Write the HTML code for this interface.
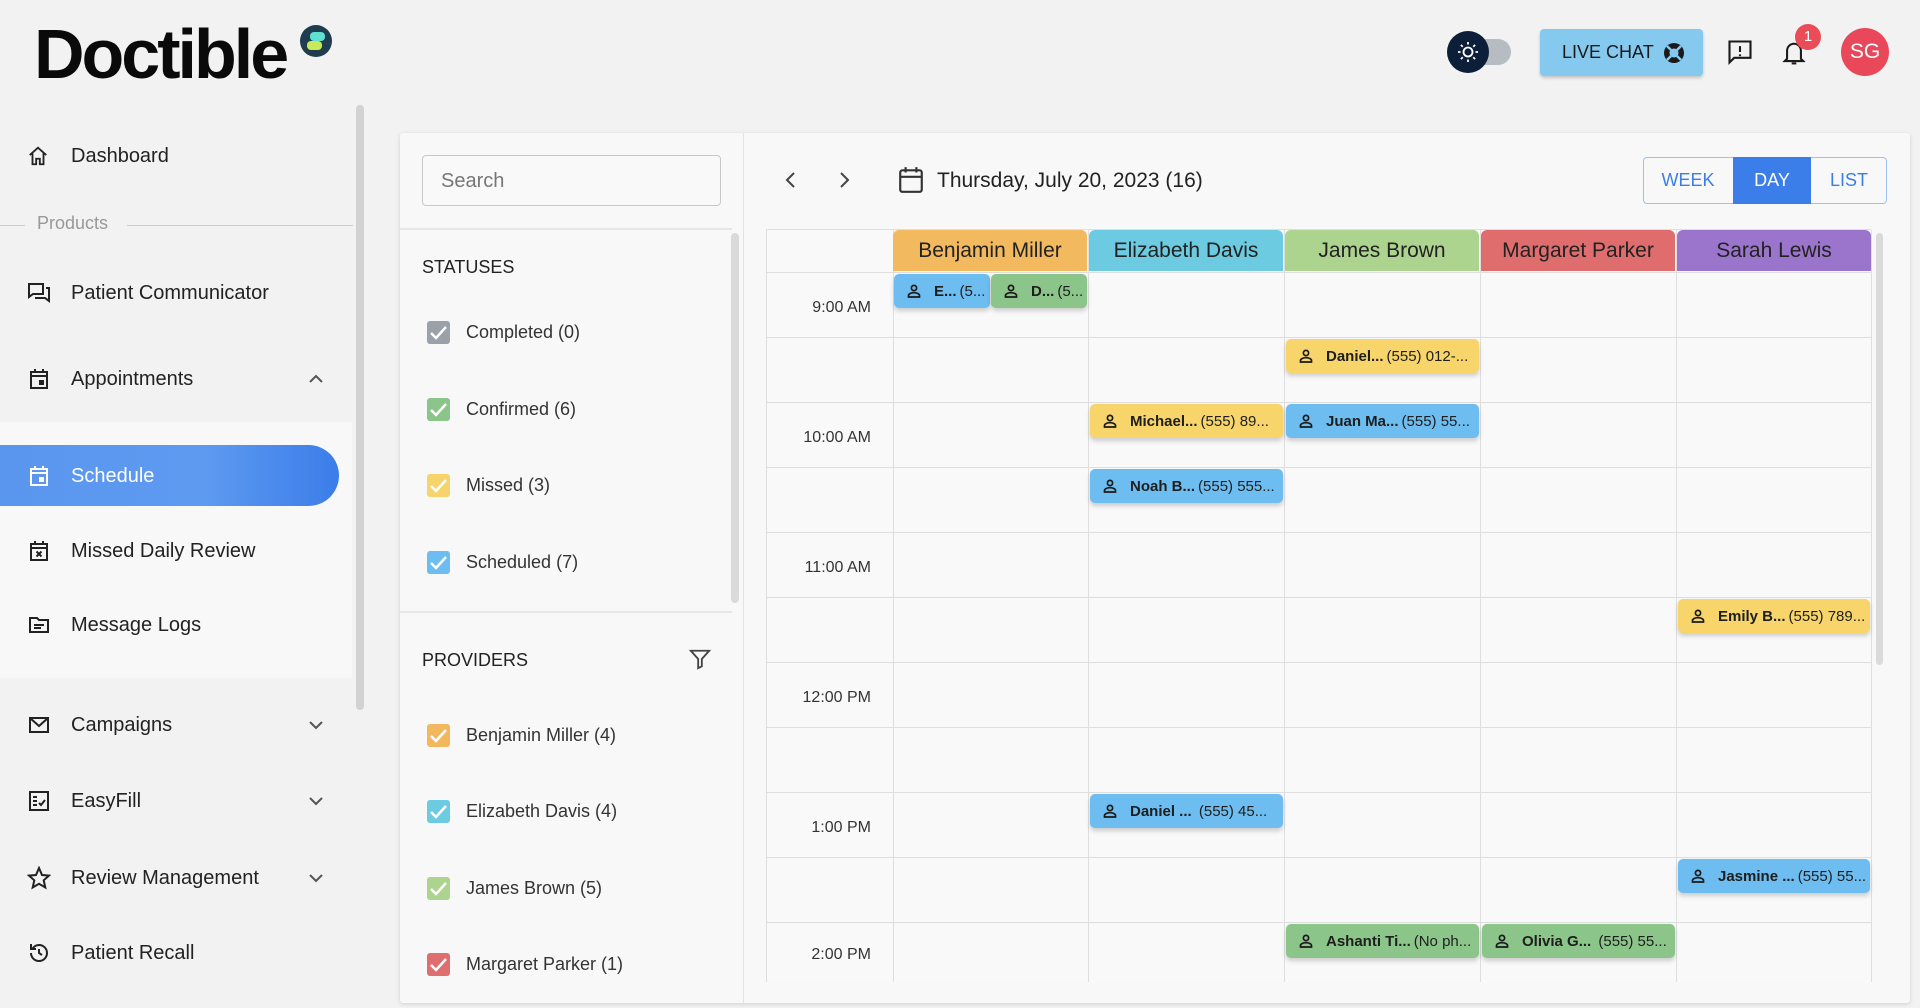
<!DOCTYPE html>
<html><head><meta charset="utf-8"><style>
*{box-sizing:border-box;margin:0;padding:0}
body{width:1920px;height:1008px;overflow:hidden;background:#f2f2f2;font-family:"Liberation Sans",sans-serif;color:#1e1e1e;position:relative}
.a{position:absolute}
.nav{position:absolute;left:0;width:340px;height:50px;display:flex;align-items:center;font-size:20px;color:#222}
.nav svg{position:absolute;left:27px}
.nav span{position:absolute;left:71px}
.nav .chev{position:absolute;left:305px}
.cb{position:absolute;left:427px;width:23px;height:23px;border-radius:3px}
.cb svg{position:absolute;left:3px;top:4px}
.cl{position:absolute;left:466px;font-size:18px;color:#333;margin-top:1px}
.hd{position:absolute;top:230px;height:41px;width:194px;border-radius:6px 6px 0 0;font-size:21px;display:flex;align-items:center;justify-content:center;color:#222}
.hl{position:absolute;left:766px;width:1105px;height:1px;background:#dedede}
.vl{position:absolute;top:230px;width:1px;height:752px;background:#dedede}
.tl{position:absolute;left:766px;width:105px;text-align:right;font-size:16px;color:#333}
.ev{position:absolute;height:34px;border-radius:5px;box-shadow:0 3px 5px rgba(0,0,0,.18);font-size:15px;display:flex;align-items:center;white-space:nowrap;overflow:hidden;color:#1e1e1e}
.ev svg{margin:0 12px 0 12px;flex:none}
.ev b{font-weight:bold;margin-right:3px}
.bl{background:#6dbdf0}.gr{background:#8cc58a}.ye{background:#f7d56a}
</style></head><body>
<div class="a" style="left:34px;top:14px;font-size:70px;font-weight:bold;letter-spacing:-3px;color:#0a0a0a">Doctible</div>
<svg class="a" style="left:299px;top:24px" width="34" height="34" viewBox="0 0 34 34"><circle cx="17" cy="17" r="16" fill="#1f3d4f"/><rect x="11" y="8" width="15" height="9" rx="4" fill="#5fe0d0"/><rect x="8" y="17" width="15" height="9" rx="4" fill="#c8ea5a"/></svg>

<div class="a" style="left:1463px;top:39px;width:48px;height:26px;border-radius:13px;background:#b7bcc3"></div>
<div class="a" style="left:1447px;top:31px;width:42px;height:42px;border-radius:50%;background:#0d1e38"></div>
<svg class="a" style="left:1456px;top:40px" width="24" height="24" viewBox="0 0 24 24" fill="none" stroke="#fff" stroke-width="1.8"><circle cx="12" cy="12" r="4.5"/><path d="M12 2v2.5M12 19.5V22M2 12h2.5M19.5 12H22M4.9 4.9l1.8 1.8M17.3 17.3l1.8 1.8M4.9 19.1l1.8-1.8M17.3 6.7l1.8-1.8"/></svg>
<div class="a" style="left:1540px;top:29px;width:163px;height:47px;border-radius:4px;background:#86c9ef;box-shadow:0 2px 3px rgba(0,0,0,.2);font-size:18px;display:flex;align-items:center;padding-left:22px;color:#1a1a1a">LIVE CHAT</div>
<svg class="a" style="left:1662px;top:41px" width="24" height="24" viewBox="0 0 24 24"><circle cx="12" cy="12" r="10" fill="#1a1a1a"/><circle cx="12" cy="12" r="4.5" fill="#86c9ef"/><path d="M5 5l4 4M19 5l-4 4M5 19l4-4M19 19l-4-4" stroke="#86c9ef" stroke-width="2.5"/></svg>
<svg class="a" style="left:1726px;top:38px" width="28" height="28" viewBox="0 0 24 24" fill="none" stroke="#1a1a1a" stroke-width="1.8"><path d="M3 3h18v14H7l-4 4z"/><path d="M12 7v5M12 14v1.5"/></svg>
<svg class="a" style="left:1780px;top:38px" width="28" height="30" viewBox="0 0 24 26" fill="none" stroke="#1a1a1a" stroke-width="1.8"><path d="M6 18V11a6 6 0 0112 0v7l2 2H4z"/><path d="M10 22h4"/></svg>
<div class="a" style="left:1795px;top:24px;width:26px;height:26px;border-radius:50%;background:#ea4c58;color:#fff;font-size:15px;text-align:center;line-height:26px">1</div>
<div class="a" style="left:1841px;top:28px;width:48px;height:48px;border-radius:50%;background:#e8485a;color:#fff;font-size:21px;text-align:center;line-height:48px">SG</div>

<div class="a" style="left:0;top:422px;width:352px;height:256px;background:#f8f8f9"></div>
<div class="a" style="left:356px;top:105px;width:8px;height:605px;border-radius:4px;background:#d2d2d2"></div>
<div class="nav" style="top:131px"><svg width="22" height="22" viewBox="0 0 24 24" fill="none" stroke="#222" stroke-width="2"><path d="M3 11l9-8 9 8M6 9v12h4v-6h4v6h4V9"/></svg><span>Dashboard</span></div>
<div class="a" style="left:0;top:225px;width:25px;height:1px;background:#ccc"></div>
<div class="a" style="left:37px;top:213px;font-size:18px;color:#999">Products</div>
<div class="a" style="left:127px;top:225px;width:226px;height:1px;background:#ccc"></div>
<div class="nav" style="top:268px"><svg width="24" height="24" viewBox="0 0 24 24" fill="none" stroke="#222" stroke-width="2"><path d="M2 3h14v10H6l-4 3zM8 17h10l4 3V7h-3"/></svg><span>Patient Communicator</span></div>
<div class="nav" style="top:354px"><svg width="24" height="24" viewBox="0 0 24 24" fill="none" stroke="#222" stroke-width="2"><rect x="4" y="5" width="16" height="16"/><path d="M4 9h16M8 2v4M16 2v4"/><rect x="13" y="14" width="3" height="3" fill="#222"/></svg><span>Appointments</span><svg class="chev" width="20" height="20" viewBox="0 0 20 20" fill="none" stroke="#555" stroke-width="2" style="left:306px"><path d="M4 13l6-6 6 6"/></svg></div>
<div class="a" style="left:0;top:445px;width:339px;height:61px;border-radius:0 31px 31px 0;background:linear-gradient(90deg,#5a96ee,#5e9af0 60%,#3b7de9)"></div>
<div class="nav" style="top:451px;color:#fff"><svg width="24" height="24" viewBox="0 0 24 24" fill="none" stroke="#fff" stroke-width="2"><rect x="4" y="5" width="16" height="16"/><path d="M4 9h16M8 2v4M16 2v4"/><rect x="13" y="14" width="3" height="3" fill="#fff"/></svg><span>Schedule</span></div>
<div class="nav" style="top:526px"><svg width="24" height="24" viewBox="0 0 24 24" fill="none" stroke="#222" stroke-width="2"><rect x="4" y="5" width="16" height="16"/><path d="M4 9h16M8 2v4M16 2v4M9.5 12.5l5 5M14.5 12.5l-5 5"/></svg><span>Missed Daily Review</span></div>
<div class="nav" style="top:600px"><svg width="24" height="24" viewBox="0 0 24 24" fill="none" stroke="#222" stroke-width="2"><path d="M3 5h7l2 2h9v12H3z"/><path d="M7 12h10M7 15h7"/></svg><span>Message Logs</span></div>
<div class="nav" style="top:700px"><svg width="24" height="24" viewBox="0 0 24 24" fill="none" stroke="#222" stroke-width="2"><rect x="3" y="5" width="18" height="14"/><path d="M3 5l9 8 9-8"/></svg><span>Campaigns</span><svg class="chev" width="20" height="20" viewBox="0 0 20 20" fill="none" stroke="#555" stroke-width="2" style="left:306px"><path d="M4 7l6 6 6-6"/></svg></div>
<div class="nav" style="top:776px"><svg width="24" height="24" viewBox="0 0 24 24" fill="none" stroke="#222" stroke-width="2"><rect x="3" y="3" width="18" height="18"/><path d="M6 8h4M6 12h4M6 16h4M12 14l2 2 4-5"/></svg><span>EasyFill</span><svg class="chev" width="20" height="20" viewBox="0 0 20 20" fill="none" stroke="#555" stroke-width="2" style="left:306px"><path d="M4 7l6 6 6-6"/></svg></div>
<div class="nav" style="top:853px"><svg width="24" height="24" viewBox="0 0 24 24" fill="none" stroke="#222" stroke-width="2"><path d="M12 2l3 7 7 .6-5.3 4.7 1.6 7.2L12 17.8 5.7 21.5l1.6-7.2L2 9.6 9 9z"/></svg><span>Review Management</span><svg class="chev" width="20" height="20" viewBox="0 0 20 20" fill="none" stroke="#555" stroke-width="2" style="left:306px"><path d="M4 7l6 6 6-6"/></svg></div>
<div class="nav" style="top:928px"><svg width="24" height="24" viewBox="0 0 24 24" fill="none" stroke="#222" stroke-width="2"><path d="M4 12a8 8 0 108-8c-3 0-5 1.5-6.5 3.5M4 3v5h5M12 8v4l3 2"/></svg><span>Patient Recall</span></div>

<div class="a" style="left:400px;top:133px;width:1510px;height:870px;background:#f8f8f9;border-radius:3px;box-shadow:0 1px 4px rgba(0,0,0,.15)"></div>
<div class="a" style="left:743px;top:133px;width:1px;height:870px;background:#e2e2e2"></div>
<div class="a" style="left:422px;top:155px;width:299px;height:51px;border:1px solid #c8c8c8;border-radius:4px;background:#f9f9fa;font-size:20px;color:#777;padding:14px 18px">Search</div>
<div class="a" style="left:400px;top:228px;width:332px;height:2px;background:#e6e6e6"></div>
<div class="a" style="left:731px;top:233px;width:8px;height:370px;border-radius:4px;background:#dadada"></div>
<div class="a" style="left:422px;top:257px;font-size:18px;color:#222">STATUSES</div>
<div class="cb" style="top:321px;background:#9aa1a9"><svg width="17" height="15" viewBox="0 0 17 15" fill="none" stroke="#fff" stroke-width="2.5"><path d="M1 8l5 5L16 2"/></svg></div><div class="cl" style="top:321px">Completed (0)</div>
<div class="cb" style="top:398px;background:#8cc58a"><svg width="17" height="15" viewBox="0 0 17 15" fill="none" stroke="#fff" stroke-width="2.5"><path d="M1 8l5 5L16 2"/></svg></div><div class="cl" style="top:398px">Confirmed (6)</div>
<div class="cb" style="top:474px;background:#f6d36b"><svg width="17" height="15" viewBox="0 0 17 15" fill="none" stroke="#fff" stroke-width="2.5"><path d="M1 8l5 5L16 2"/></svg></div><div class="cl" style="top:474px">Missed (3)</div>
<div class="cb" style="top:551px;background:#6dbdf0"><svg width="17" height="15" viewBox="0 0 17 15" fill="none" stroke="#fff" stroke-width="2.5"><path d="M1 8l5 5L16 2"/></svg></div><div class="cl" style="top:551px">Scheduled (7)</div>
<div class="a" style="left:400px;top:611px;width:332px;height:2px;background:#e6e6e6"></div>
<div class="a" style="left:422px;top:650px;font-size:18px;color:#222">PROVIDERS</div>
<svg class="a" style="left:689px;top:648px" width="22" height="22" viewBox="0 0 24 24" fill="none" stroke="#444" stroke-width="2"><path d="M2 3h20l-8 9v8l-4 2V12z"/></svg>
<div class="cb" style="top:724px;background:#f3b85e"><svg width="17" height="15" viewBox="0 0 17 15" fill="none" stroke="#fff" stroke-width="2.5"><path d="M1 8l5 5L16 2"/></svg></div><div class="cl" style="top:724px">Benjamin Miller (4)</div>
<div class="cb" style="top:800px;background:#6ccbe0"><svg width="17" height="15" viewBox="0 0 17 15" fill="none" stroke="#fff" stroke-width="2.5"><path d="M1 8l5 5L16 2"/></svg></div><div class="cl" style="top:800px">Elizabeth Davis (4)</div>
<div class="cb" style="top:877px;background:#add48e"><svg width="17" height="15" viewBox="0 0 17 15" fill="none" stroke="#fff" stroke-width="2.5"><path d="M1 8l5 5L16 2"/></svg></div><div class="cl" style="top:877px">James Brown (5)</div>
<div class="cb" style="top:953px;background:#df6f6f"><svg width="17" height="15" viewBox="0 0 17 15" fill="none" stroke="#fff" stroke-width="2.5"><path d="M1 8l5 5L16 2"/></svg></div><div class="cl" style="top:953px">Margaret Parker (1)</div>

<svg class="a" style="left:781px;top:170px" width="20" height="20" viewBox="0 0 20 20" fill="none" stroke="#444" stroke-width="2"><path d="M13 3l-7 7 7 7"/></svg>
<svg class="a" style="left:834px;top:170px" width="20" height="20" viewBox="0 0 20 20" fill="none" stroke="#444" stroke-width="2"><path d="M7 3l7 7-7 7"/></svg>
<svg class="a" style="left:898px;top:166px" width="26" height="28" viewBox="0 0 24 26" fill="none" stroke="#333" stroke-width="2"><rect x="2" y="4" width="20" height="20" rx="2"/><path d="M2 10h20M7 1v5M17 1v5"/></svg>
<div class="a" style="left:937px;top:169px;font-size:21px;color:#222">Thursday, July 20, 2023 (16)</div>
<div class="a" style="left:1643px;top:157px;width:244px;height:47px;border:1px solid #9cc0f2;border-radius:4px"></div>
<div class="a" style="left:1643px;top:157px;width:90px;height:47px;line-height:47px;text-align:center;color:#3b7fe6;font-size:18px">WEEK</div>
<div class="a" style="left:1733px;top:157px;width:78px;height:47px;line-height:47px;text-align:center;color:#fff;background:#3b7de9;font-size:18px">DAY</div>
<div class="a" style="left:1811px;top:157px;width:76px;height:47px;line-height:47px;text-align:center;color:#3b7fe6;font-size:18px">LIST</div>

<div class="a" style="left:766px;top:228px;width:1105px;height:754px;background:#f9f9fa"></div>
<div class="hl" style="top:229px"></div>
<div class="hl" style="top:272px"></div><div class="hl" style="top:337px"></div><div class="hl" style="top:402px"></div><div class="hl" style="top:467px"></div><div class="hl" style="top:532px"></div><div class="hl" style="top:597px"></div><div class="hl" style="top:662px"></div><div class="hl" style="top:727px"></div><div class="hl" style="top:792px"></div><div class="hl" style="top:857px"></div><div class="hl" style="top:922px"></div>
<div class="vl" style="left:766px"></div><div class="vl" style="left:893px"></div><div class="vl" style="left:1088px"></div><div class="vl" style="left:1284px"></div><div class="vl" style="left:1480px"></div><div class="vl" style="left:1676px"></div><div class="vl" style="left:1871px"></div>
<div class="a" style="left:1876px;top:233px;width:7px;height:432px;border-radius:4px;background:#dadada"></div>
<div class="hd" style="left:893px;background:#f3b95f">Benjamin Miller</div>
<div class="hd" style="left:1089px;background:#6ccbe0">Elizabeth Davis</div>
<div class="hd" style="left:1285px;background:#add48e">James Brown</div>
<div class="hd" style="left:1481px;background:#df6d6d">Margaret Parker</div>
<div class="hd" style="left:1677px;background:#9b74cc">Sarah Lewis</div>
<div class="tl" style="top:299px">9:00 AM</div>
<div class="tl" style="top:429px">10:00 AM</div>
<div class="tl" style="top:559px">11:00 AM</div>
<div class="tl" style="top:689px">12:00 PM</div>
<div class="tl" style="top:819px">1:00 PM</div>
<div class="tl" style="top:946px">2:00 PM</div>

<svg width="0" height="0" style="position:absolute"><defs><symbol id="p" viewBox="0 0 16 16"><g fill="none" stroke="#1a1a1a" stroke-width="1.7"><circle cx="8" cy="5" r="2.6"/><path d="M2.5 14v-1.5c0-1.5 2.5-2.8 5.5-2.8s5.5 1.3 5.5 2.8V14z"/></g></symbol></defs></svg>
<div class="ev bl" style="left:894px;top:274px;width:96px"><svg width="16" height="16"><use href="#p"/></svg><b>E...</b>(5...</div>
<div class="ev gr" style="left:991px;top:274px;width:96px"><svg width="16" height="16"><use href="#p"/></svg><b>D...</b>(5...</div>
<div class="ev ye" style="left:1286px;top:339px;width:193px"><svg width="16" height="16"><use href="#p"/></svg><b>Daniel...</b>(555) 012-...</div>
<div class="ev ye" style="left:1090px;top:404px;width:193px"><svg width="16" height="16"><use href="#p"/></svg><b>Michael...</b>(555) 89...</div>
<div class="ev bl" style="left:1286px;top:404px;width:193px"><svg width="16" height="16"><use href="#p"/></svg><b>Juan Ma...</b>(555) 55...</div>
<div class="ev bl" style="left:1090px;top:469px;width:193px"><svg width="16" height="16"><use href="#p"/></svg><b>Noah B...</b>(555) 555...</div>
<div class="ev ye" style="left:1678px;top:599px;width:192px"><svg width="16" height="16"><use href="#p"/></svg><b>Emily B...</b>(555) 789...</div>
<div class="ev bl" style="left:1090px;top:794px;width:193px"><svg width="16" height="16"><use href="#p"/></svg><b>Daniel ...</b>&nbsp;(555) 45...</div>
<div class="ev bl" style="left:1678px;top:859px;width:192px"><svg width="16" height="16"><use href="#p"/></svg><b>Jasmine ...</b>(555) 55...</div>
<div class="ev gr" style="left:1286px;top:924px;width:193px"><svg width="16" height="16"><use href="#p"/></svg><b>Ashanti Ti...</b>(No ph...</div>
<div class="ev gr" style="left:1482px;top:924px;width:193px"><svg width="16" height="16"><use href="#p"/></svg><b>Olivia G...</b>&nbsp;(555) 55...</div>
</body></html>
